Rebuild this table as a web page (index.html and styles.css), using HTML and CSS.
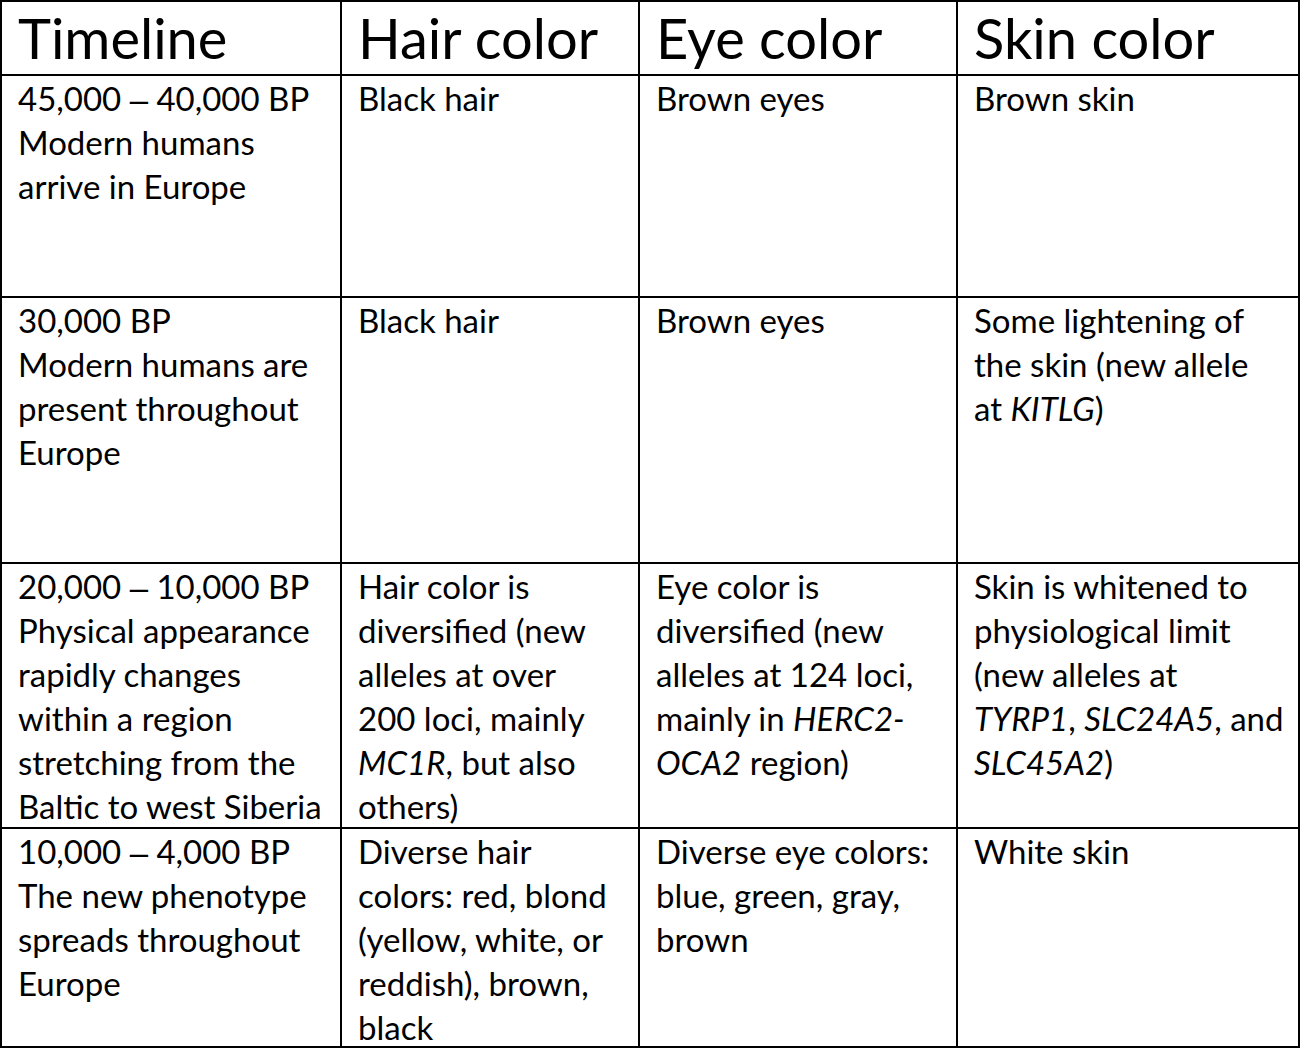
FILE: index.html
```html
<!DOCTYPE html>
<html>
<head>
<meta charset="utf-8">
<link rel="stylesheet" href="styles.css">
</head>
<body>
<div class="table">
  <div class="cell head">Timeline</div>
  <div class="cell head">Hair color</div>
  <div class="cell head">Eye color</div>
  <div class="cell head">Skin color</div>

  <div class="cell r1">45,000 <span class="dash">–</span> 40,000 BP<br>Modern humans<br>arrive in Europe</div>
  <div class="cell r1">Black hair</div>
  <div class="cell r1">Brown eyes</div>
  <div class="cell r1">Brown skin</div>

  <div class="cell r2">30,000 BP<br>Modern humans are<br>present throughout<br>Europe</div>
  <div class="cell r2">Black hair</div>
  <div class="cell r2">Brown eyes</div>
  <div class="cell r2">Some lightening of<br>the skin (new allele<br>at <i>KITLG</i>)</div>

  <div class="cell r3">20,000 <span class="dash">–</span> 10,000 BP<br>Physical appearance<br>rapidly changes<br>within a region<br>stretching from the<br>Baltic to west Siberia</div>
  <div class="cell r3">Hair color is<br>diversified (new<br>alleles at over<br>200 loci, mainly<br><i>MC1R</i>, but also<br>others)</div>
  <div class="cell r3">Eye color is<br>diversified (new<br>alleles at 124 loci,<br>mainly in <i>HERC2-</i><br><i>OCA2</i> region)</div>
  <div class="cell r3">Skin is whitened to<br>physiological limit<br>(new alleles at<br><i>TYRP1</i>, <i>SLC24A5</i>, and<br><i>SLC45A2</i>)</div>

  <div class="cell r4">10,000 <span class="dash">–</span> 4,000 BP<br>The new phenotype<br>spreads throughout<br>Europe</div>
  <div class="cell r4">Diverse hair<br>colors: red, blond<br>(yellow, white, or<br>reddish), brown,<br>black</div>
  <div class="cell r4">Diverse eye colors:<br>blue, green, gray,<br>brown</div>
  <div class="cell r4">White skin</div>
</div>
</body>
</html>
```

FILE: styles.css
```css
html, body {
  margin: 0;
  padding: 0;
  background: #fff;
}
body {
  font-family: "Lato", "Open Sans", sans-serif;
  color: #000;
  overflow: hidden;
}
.table {
  display: grid;
  grid-template-columns: 340px 298px 318px 342px;
  grid-template-rows: 74px 222px 266px 265px 219px;
  width: 1300px;
  box-sizing: border-box;
  border-top: 2px solid #000;
  border-left: 2px solid #000;
}
.cell {
  box-sizing: border-box;
  border-right: 2px solid #000;
  border-bottom: 2px solid #000;
  padding: 0 0 0 16px;
  font-size: 33px;
  line-height: 44px;
  white-space: nowrap;
  overflow: hidden;
}
.cell.head {
  font-size: 56px;
  line-height: 72px;
}
.dash {
  font-family: "Liberation Sans", sans-serif;
  line-height: 0;
}
```
